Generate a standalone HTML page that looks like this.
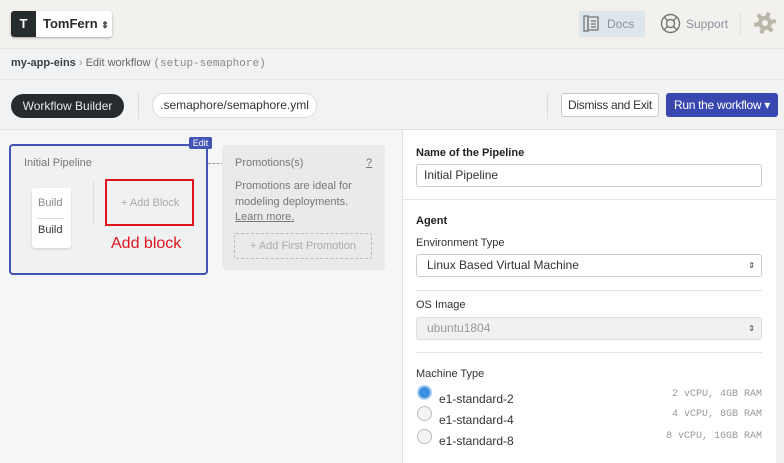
<!DOCTYPE html><html><head><style>
*{box-sizing:border-box;margin:0;padding:0}
body{width:784px;height:463px;overflow:hidden;background:#f5f6f7;font-family:"Liberation Sans",sans-serif;font-size:12px;color:#333;position:relative}
.abs{position:absolute}
.mono{font-family:"Liberation Mono",monospace}
</style></head><body>
<div class="abs" style="left:0;top:0;width:784px;height:49px;background:#f2f1ed;border-bottom:1px solid #e2e2e0"></div>
<div class="abs" style="left:11px;top:11px;width:101px;height:26px;background:#fff;border-radius:3px;box-shadow:0 1px 2px rgba(0,0,0,.3);overflow:hidden">
 <div class="abs" style="left:0;top:0;width:25px;height:26px;background:#262b2e;color:#fff;font-weight:bold;font-size:13px;text-align:center;line-height:26px">T</div>
 <div class="abs" style="left:32px;top:0;line-height:26px;font-weight:bold;font-size:13px;color:#262b2e">TomFern <span style="font-size:9px">⇕</span></div>
</div>
<div class="abs" style="left:579px;top:11px;width:66px;height:26px;background:#dde6ea"></div>
<svg class="abs" style="left:583px;top:15px" width="16" height="17" viewBox="0 0 16 17" fill="none" stroke="#777" stroke-width="1.3"><rect x="1" y="1" width="4" height="15"/><rect x="5" y="2" width="10" height="13"/><path d="M8 6h5M8 9h5M8 12h5"/></svg>
<div class="abs" style="left:607px;top:17px;color:#8a939b;font-size:12px">Docs</div>
<svg class="abs" style="left:660px;top:13px" width="21" height="21" viewBox="0 0 21 21" fill="none" stroke="#777" stroke-width="1.4"><circle cx="10.5" cy="10.5" r="9"/><circle cx="10.5" cy="10.5" r="4"/><path d="M4 4l3.7 3.7M17 4l-3.7 3.7M4 17l3.7-3.7M17 17l-3.7-3.7"/></svg>
<div class="abs" style="left:686px;top:17px;color:#8a939b;font-size:12px">Support</div>
<div class="abs" style="left:740px;top:12px;width:1px;height:24px;background:#e0dfdb"></div>
<svg class="abs" style="left:753px;top:11px" width="24" height="24" viewBox="0 0 24 24"><g fill="#bcb6aa"><circle cx="12" cy="12" r="7"/><rect x="10" y="1" width="4" height="22" transform="rotate(20 12 12)"/><rect x="10" y="1" width="4" height="22" transform="rotate(80 12 12)"/><rect x="10" y="1" width="4" height="22" transform="rotate(140 12 12)"/></g><circle cx="12" cy="12" r="3" fill="#f2f1ed"/></svg>
<div class="abs" style="left:0;top:49px;width:784px;height:31px;background:#f0f2f4;border-bottom:1px solid #e2e4e6"></div>
<div class="abs" style="left:11px;top:57px;font-size:11px;color:#444"><b style="font-weight:bold;color:#3a4147">my-app-eins</b> <span style="color:#999">›</span> <span style="color:#666">Edit workflow</span> <span class="mono" style="color:#888;font-size:11px">(setup-semaphore)</span></div>
<div class="abs" style="left:0;top:80px;width:784px;height:50px;background:#f0f2f4;border-bottom:1px solid #dfe1e3"></div>
<div class="abs" style="left:11px;top:94px;width:113px;height:24px;background:#262b2e;border-radius:12px;color:#e8e8e8;text-align:center;line-height:24px;font-size:12px">Workflow Builder</div>
<div class="abs" style="left:138px;top:93px;width:1px;height:26px;background:#dcdcdc"></div>
<div class="abs" style="left:152px;top:93px;width:165px;height:25px;background:#fff;border:1px solid #ddd;border-radius:12px;text-align:center;line-height:23px;font-size:12px;color:#333">.semaphore/semaphore.yml</div>
<div class="abs" style="left:547px;top:93px;width:1px;height:26px;background:#dcdcdc"></div>
<div class="abs" style="left:561px;top:93px;width:98px;height:24px;background:#fff;border:1px solid #c9c9c9;border-radius:3px;text-align:center;line-height:22px;color:#333;font-size:12px;letter-spacing:-0.3px">Dismiss and Exit</div>
<div class="abs" style="left:666px;top:93px;width:112px;height:24px;background:#3947b0;border-radius:3px;text-align:center;line-height:24px;color:#fff;font-size:12px;letter-spacing:-0.3px">Run the workflow ▾</div>
<!-- canvas -->
<div class="abs" style="left:9px;top:144px;width:199px;height:131px;border:2px solid #4254b5;border-radius:4px;background:#f0f1f3"></div>
<div class="abs" style="left:189px;top:137px;width:23px;height:12px;background:#4254b5;color:#fff;font-size:9px;text-align:center;line-height:12px;border-radius:2px">Edit</div>
<div class="abs" style="left:24px;top:157px;color:#777;font-size:11px">Initial Pipeline</div>
<div class="abs" style="left:32px;top:188px;width:39px;height:60px;background:#fff;border-radius:3px;box-shadow:0 1px 2px rgba(0,0,0,.15)"></div>
<div class="abs" style="left:38px;top:197px;color:#888;font-size:11px">Build</div>
<div class="abs" style="left:37px;top:218px;width:27px;height:1px;background:#ddd"></div>
<div class="abs" style="left:38px;top:224px;color:#333;font-size:11px">Build</div>
<div class="abs" style="left:93px;top:181px;width:1px;height:45px;background:#ddd"></div>
<div class="abs" style="left:105px;top:179px;width:89px;height:47px;border:2px solid #e0151c"></div>
<div class="abs" style="left:121px;top:197px;color:#aaa;font-size:11px">+ Add Block</div>
<div class="abs" style="left:111px;top:235px;color:#e0151c;font-size:16px">Add block</div>
<div class="abs" style="left:208px;top:163px;width:16px;border-top:1px dashed #999"></div>
<div class="abs" style="left:222px;top:145px;width:163px;height:125px;background:#e9eaec;border-radius:4px"></div>
<div class="abs" style="left:235px;top:157px;color:#777;font-size:11px">Promotions(s)</div>
<div class="abs" style="left:366px;top:157px;color:#777;font-size:11px;text-decoration:underline">?</div>
<div class="abs" style="left:235px;top:179px;color:#777;font-size:11px;line-height:15.5px">Promotions are ideal for<br>modeling deployments.<br><u>Learn more.</u></div>
<div class="abs" style="left:234px;top:233px;width:138px;height:26px;border:1px dashed #bbb;border-radius:2px;color:#aaa;font-size:11px;text-align:center;line-height:24px">+ Add First Promotion</div>
<!-- right panel -->
<div class="abs" style="left:402px;top:130px;width:374px;height:333px;background:#fff;border-left:1px solid #e0e0e0"></div>
<div class="abs" style="left:776px;top:130px;width:8px;height:333px;background:#f0f1f2"></div>
<div class="abs" style="left:416px;top:147px;font-weight:bold;font-size:11px;color:#222">Name of the Pipeline</div>
<div class="abs" style="left:416px;top:164px;width:346px;height:23px;border:1px solid #ccc;border-radius:3px;padding-left:7px;line-height:21px;font-size:12px;color:#333">Initial Pipeline</div>
<div class="abs" style="left:403px;top:199px;width:373px;height:1px;background:#e4e4e4"></div>
<div class="abs" style="left:416px;top:215px;font-weight:bold;font-size:11px;color:#222">Agent</div>
<div class="abs" style="left:416px;top:237px;font-size:11px;color:#333">Environment Type</div>
<div class="abs" style="left:416px;top:254px;width:346px;height:23px;border:1px solid #ccc;border-radius:3px;padding-left:10px;line-height:21px;font-size:12px;color:#333">Linux Based Virtual Machine<span style="position:absolute;right:6px;font-size:8px">⇕</span></div>
<div class="abs" style="left:416px;top:290px;width:346px;height:1px;background:#e4e4e4"></div>
<div class="abs" style="left:416px;top:299px;font-size:11px;color:#333">OS Image</div>
<div class="abs" style="left:416px;top:317px;width:346px;height:23px;border:1px solid #ddd;background:#f0f1f2;border-radius:3px;padding-left:10px;line-height:21px;font-size:12px;color:#999">ubuntu1804<span style="position:absolute;right:6px;font-size:8px;color:#444">⇕</span></div>
<div class="abs" style="left:416px;top:352px;width:346px;height:1px;background:#e4e4e4"></div>
<div class="abs" style="left:416px;top:368px;font-size:11px;color:#333">Machine Type</div>
<div class="abs" style="left:417px;top:385px;width:15px;height:15px;border-radius:50%;background:#3b8fe0;border:2px solid #a8cdf1"></div>
<div class="abs" style="left:417px;top:406px;width:15px;height:15px;border-radius:50%;background:#f4f4f4;border:1px solid #bbb"></div>
<div class="abs" style="left:417px;top:429px;width:15px;height:15px;border-radius:50%;background:#f4f4f4;border:1px solid #bbb"></div>
<div class="abs" style="left:439px;top:392px;font-size:12px;color:#333">e1-standard-2</div>
<div class="abs" style="left:439px;top:413px;font-size:12px;color:#333">e1-standard-4</div>
<div class="abs" style="left:439px;top:434px;font-size:12px;color:#333">e1-standard-8</div>
<div class="abs mono" style="right:22px;top:389px;font-size:10px;color:#999">2 vCPU, 4GB RAM</div>
<div class="abs mono" style="right:22px;top:409px;font-size:10px;color:#999">4 vCPU, 8GB RAM</div>
<div class="abs mono" style="right:22px;top:431px;font-size:10px;color:#999">8 vCPU, 16GB RAM</div>
</body></html>
